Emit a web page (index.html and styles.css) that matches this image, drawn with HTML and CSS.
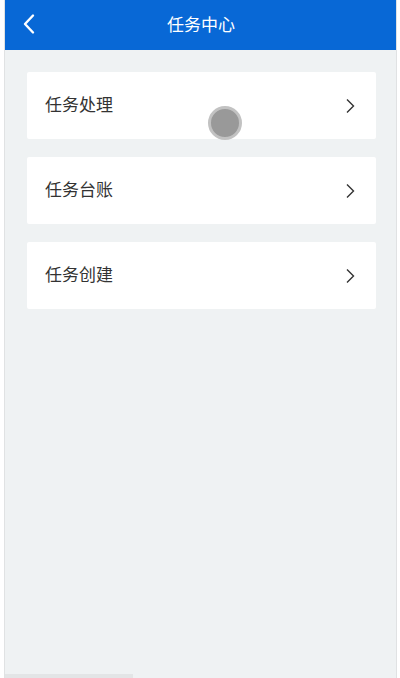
FILE: index.html
```html
<!DOCTYPE html>
<html lang="zh">
<head>
<meta charset="utf-8">
<title>任务中心</title>
<link rel="stylesheet" href="styles.css">
</head>
<body>
<div class="frame">
  <header class="topbar">
    <span class="back">
      <svg width="14" height="22" viewBox="0 0 14 22"><polyline points="11,2.5 3,11 11,19.5" fill="none" stroke="#fff" stroke-width="2.4" stroke-linecap="round" stroke-linejoin="round"/></svg>
    </span>
    <h1 class="title">任务中心</h1>
  </header>
  <main class="list">
    <div class="item"><span class="label">任务处理</span><svg class="arrow" width="10" height="16" viewBox="0 0 10 16"><polyline points="2,1.5 8.5,8 2,14.5" fill="none" stroke="#333" stroke-width="1.4"/></svg></div>
    <div class="item"><span class="label">任务台账</span><svg class="arrow" width="10" height="16" viewBox="0 0 10 16"><polyline points="2,1.5 8.5,8 2,14.5" fill="none" stroke="#333" stroke-width="1.4"/></svg></div>
    <div class="item"><span class="label">任务创建</span><svg class="arrow" width="10" height="16" viewBox="0 0 10 16"><polyline points="2,1.5 8.5,8 2,14.5" fill="none" stroke="#333" stroke-width="1.4"/></svg></div>
  </main>
  <div class="touch"></div>
  <div class="scrollthumb"></div>
</div>
</body>
</html>
```
FILE: styles.css
```css
html, body {
  margin: 0;
  padding: 0;
  background: #ffffff;
}
body {
  font-family: "Noto Sans CJK SC", "Noto Sans", sans-serif;
}
.frame {
  position: relative;
  margin-left: 4px;
  width: 391px;
  height: 678px;
  border-left: 1px solid #e0e2e3;
  border-right: 1px solid #e0e2e3;
  background: #eff2f3;
  overflow: hidden;
}
.topbar {
  height: 50px;
  background: #0868d6;
  display: flex;
  align-items: center;
  justify-content: center;
  position: relative;
}
.back {
  position: absolute;
  left: 17px;
  top: 13px;
  width: 14px;
  height: 22px;
  display: flex;
}
.title {
  margin: 0;
  font-size: 17px;
  font-weight: normal;
  color: #ffffff;
  line-height: 50px;
  margin-top: -3px;
  margin-left: 1px;
}
.list {
  display: flex;
  flex-direction: column;
  gap: 18px;
  padding: 22px 20px 0 22px;
}
.item {
  height: 67px;
  background: #ffffff;
  border-radius: 2px;
  display: flex;
  align-items: center;
  justify-content: space-between;
  padding: 0 21px 0 18px;
}
.label {
  font-size: 17px;
  color: #333333;
  margin-top: -4px;
}
.arrow {
  display: block;
}
.touch {
  position: absolute;
  left: 203px;
  top: 106px;
  width: 28px;
  height: 28px;
  border-radius: 50%;
  background: #999999;
  border: 3px solid #c2c2c2;
}
.scrollthumb {
  position: absolute;
  left: 0;
  bottom: 0;
  width: 128px;
  height: 4px;
  background: #e3e5e6;
}
```
